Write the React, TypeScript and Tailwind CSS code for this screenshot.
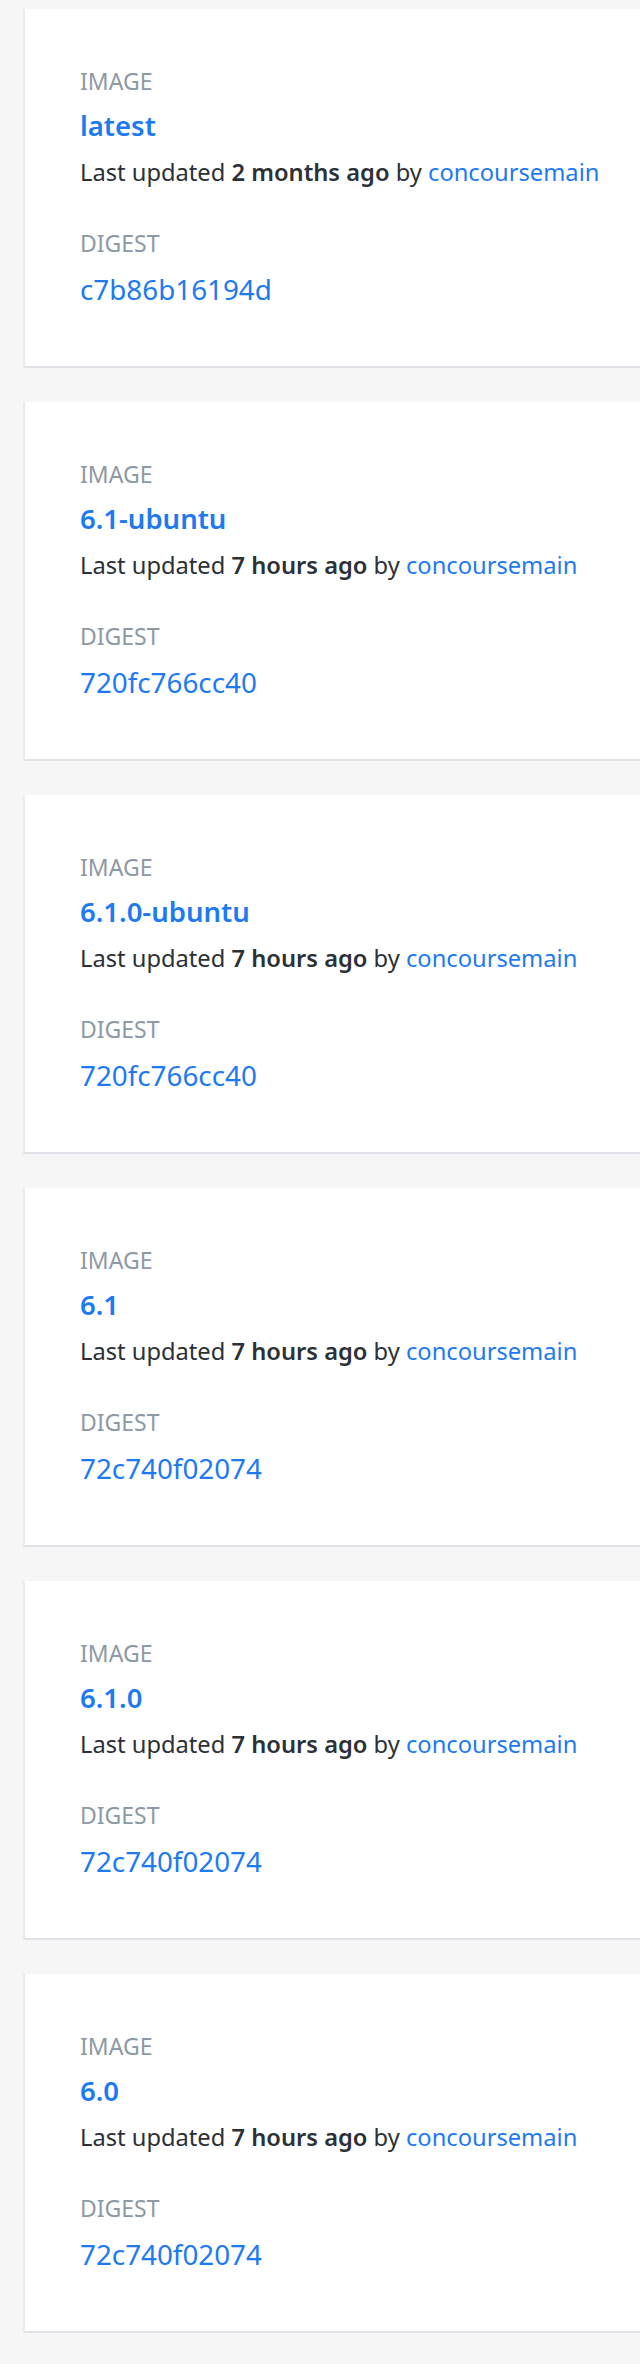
import React from "react";

type Item = { tag: string; when: string; digest: string };

const items: Item[] = [
  { tag: "latest", when: "2 months ago", digest: "c7b86b16194d" },
  { tag: "6.1-ubuntu", when: "7 hours ago", digest: "720fc766cc40" },
  { tag: "6.1.0-ubuntu", when: "7 hours ago", digest: "720fc766cc40" },
  { tag: "6.1", when: "7 hours ago", digest: "72c740f02074" },
  { tag: "6.1.0", when: "7 hours ago", digest: "72c740f02074" },
  { tag: "6.0", when: "7 hours ago", digest: "72c740f02074" },
];

function Card({ item }: { item: Item }) {
  return (
    <div className="h-[359px] bg-white border-l-2 border-b-2 border-l-[#ebebeb] border-b-[#dfe3e8] pt-[56px] pl-[55px]">
      <div className="text-[23px] leading-[32px] text-[#8d99a5] uppercase">Image</div>
      <div className="mt-[9px] text-[27.5px] leading-[40px] font-semibold text-[#1d7af3]">{item.tag}</div>
      <div className="mt-[8px] text-[23.7px] leading-[36px] text-[#2b3137] whitespace-nowrap">
        Last updated <span className="font-semibold">{item.when}</span> by{" "}
        <span className="text-[#1d7af3]">concoursemain</span>
      </div>
      <div className="mt-[37px] text-[23px] leading-[32px] text-[#8d99a5] uppercase">Digest</div>
      <div className="mt-[10px] text-[27.8px] leading-[40px] text-[#1d7af3]">{item.digest}</div>
    </div>
  );
}

export default function App() {
  return (
    <div
      className="min-h-[2364px] bg-[#f6f6f6] pt-[9px] pl-[23px] pb-[31px] flex flex-col gap-[34px] overflow-hidden"
      style={{ fontFamily: '"Noto Sans", "Open Sans", sans-serif' }}
    >
      {items.map((it, i) => (
        <Card key={i} item={it} />
      ))}
    </div>
  );
}
